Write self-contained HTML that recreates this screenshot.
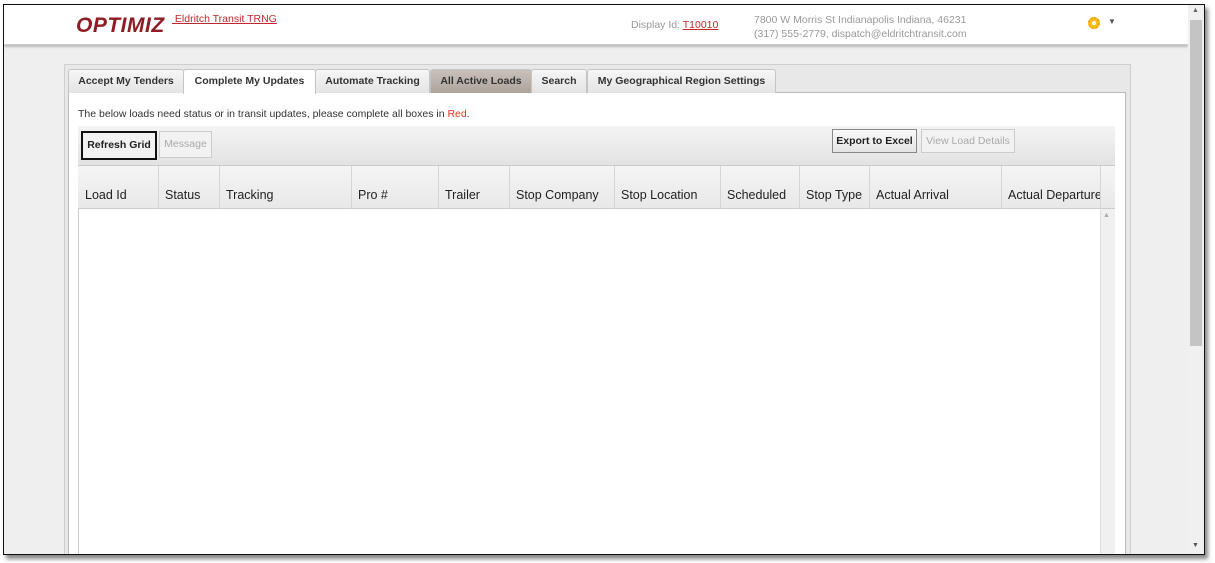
<!DOCTYPE html>
<html><head><style>
*{box-sizing:border-box;margin:0;padding:0}
body{width:1215px;height:563px;background:#fff;font-family:"Liberation Sans",Arial,sans-serif;position:relative;overflow:hidden}
.frame{position:absolute;left:3px;top:4px;width:1202px;height:551px;border:1px solid #111;background:#efefef;box-shadow:3px 4px 4px #888;overflow:hidden}
.hdr{position:absolute;left:0;top:0;width:1184px;height:40px;background:#fff;border-bottom:1px solid #ccc;box-shadow:0 2px 2px #bbb}
.abs{position:absolute;white-space:nowrap}
.sb{position:absolute;left:1184px;top:0;width:16px;height:549px;background:#f0f0f0}
.thumb{position:absolute;left:1186px;top:15px;width:12px;height:326px;background:#c4c4c4}
.panel{position:absolute;left:60px;top:59px;width:1067px;height:500px;background:#e8e8e8;border:1px solid #cfcfcf}
.content{position:absolute;left:64px;top:87px;width:1058px;height:470px;background:#fff;border:1px solid #bbb}
.tab{position:absolute;top:64px;height:24px;border:1px solid #c5c5c5;border-bottom:none;background:linear-gradient(#f6f6f6,#e4e4e4);font-size:10.5px;font-weight:bold;color:#333;text-align:center;line-height:22px;border-radius:3px 3px 0 0}
.tb{position:absolute;left:74px;top:121px;width:1037px;height:40px;background:linear-gradient(#f4f4f4,#e3e3e3);border-bottom:1px solid #ccc}
.btn{position:absolute;font-size:10.5px;height:24px;line-height:22px;text-align:center;border:1px solid #ccc;background:#f2f2f2;white-space:nowrap}
.gh{position:absolute;left:74px;top:161px;width:1037px;height:43px;background:linear-gradient(#f5f5f5,#e8e8e8);border-bottom:1px solid #ccc}
.col{position:absolute;top:161px;height:43px;border-left:1px solid #d5d5d5;font-size:12.5px;color:#222;padding:22px 0 0 6px;white-space:nowrap;overflow:hidden}
.grid{position:absolute;left:74px;top:204px;width:1037px;height:350px;background:#fff;border-left:1px solid #ccc}
</style></head><body>
<div class="frame">
 <div class="hdr">
  <div class="abs" style="left:72px;top:9px;font-size:21px;font-weight:bold;font-style:italic;color:#8e1c22;letter-spacing:0.5px">OPTIMIZ</div>
  <div class="abs" style="left:168px;top:8px;font-size:10.5px;color:#c0282d;text-decoration:underline">&nbsp;Eldritch Transit TRNG</div>
  <div class="abs" style="left:627px;top:14px;font-size:10.5px;color:#999">Display Id: <span style="color:#c0282d;text-decoration:underline">T10010</span></div>
  <div class="abs" style="left:750px;top:8px;font-size:10.5px;color:#999;line-height:14px">7800 W Morris St Indianapolis Indiana, 46231<br>(317) 555-2779, dispatch@eldritchtransit.com</div>
  <div class="abs" style="left:1084px;top:12px;width:12px;height:12px;border-radius:50%;background:#f5c020;border:2px dotted #f0a000"><div style="margin:2px;width:4px;height:4px;border-radius:50%;background:#fff"></div></div>
  <div class="abs" style="left:1104px;top:12px;font-size:8px;color:#555">▼</div>
 </div>
 <div class="sb"></div><div class="thumb"></div>
 <div class="abs" style="left:1188px;top:2px;font-size:7px;color:#666">▲</div>
 <div class="abs" style="left:1188px;top:537px;font-size:7px;color:#555">▼</div>
 <div class="panel"></div>
 <div class="content"></div>
 <div class="tab" style="left:64px;width:116px">Accept My Tenders</div>
 <div class="tab" style="left:179px;width:133px;background:#fff;height:25px">Complete My Updates</div>
 <div class="tab" style="left:311px;width:115px">Automate Tracking</div>
 <div class="tab" style="left:426px;width:102px;background:linear-gradient(#c8c0ba,#aea49d);color:#333">All Active Loads</div>
 <div class="tab" style="left:527px;width:56px">Search</div>
 <div class="tab" style="left:583px;width:189px">My Geographical Region Settings</div>
 <div class="abs" style="left:74px;top:103px;font-size:10.5px;color:#333">The below loads need status or in transit updates, please complete all boxes in <span style="color:#e32">Red</span>.</div>
 <div class="tb"></div>
 <div class="btn" style="left:77px;top:126px;width:76px;height:29px;line-height:25px;border:2px solid #111;font-weight:bold;color:#222">Refresh Grid</div>
 <div class="btn" style="left:155px;top:126px;width:53px;height:27px;line-height:25px;color:#aaa">Message</div>
 <div class="btn" style="left:828px;top:124px;width:85px;border-color:#888;font-weight:bold;color:#222;background:linear-gradient(#fafafa,#e4e4e4)">Export to Excel</div>
 <div class="btn" style="left:917px;top:124px;width:94px;color:#aaa">View Load Details</div>
 <div class="gh"></div>
 <div class="col" style="left:75px;width:80px;border:none">Load Id</div>
 <div class="col" style="left:154px;width:61px">Status</div>
 <div class="col" style="left:215px;width:132px">Tracking</div>
 <div class="col" style="left:347px;width:87px">Pro #</div>
 <div class="col" style="left:434px;width:71px">Trailer</div>
 <div class="col" style="left:505px;width:105px">Stop Company</div>
 <div class="col" style="left:610px;width:106px">Stop Location</div>
 <div class="col" style="left:716px;width:79px">Scheduled</div>
 <div class="col" style="left:795px;width:70px">Stop Type</div>
 <div class="col" style="left:865px;width:132px">Actual Arrival</div>
 <div class="col" style="left:997px;width:99px">Actual Departure</div>
 <div class="col" style="left:1096px;width:15px"></div>
 <div class="grid"></div>
 <div class="abs" style="left:1096px;top:204px;width:15px;height:350px;background:#f0f0f0;border-left:1px solid #ddd"></div>
 <div class="abs" style="left:1099px;top:207px;font-size:7px;color:#aaa">▲</div>
</div>
</body></html>
